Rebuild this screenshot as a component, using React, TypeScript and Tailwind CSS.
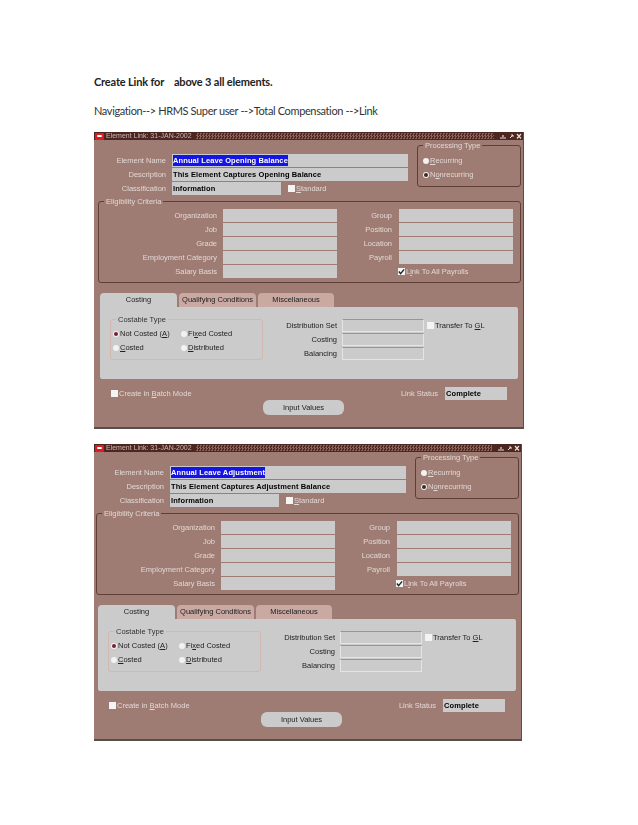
import type { ReactNode } from 'react';

const formFont = "font-['Liberation_Sans',sans-serif]";

function Check({ checked = false }: { checked?: boolean }) {
  return (
    <span className="flex h-[7px] w-[7px] shrink-0 items-center justify-center bg-[#f4f4f4]">
      {checked && (
        <svg viewBox="0 0 8 8" className="h-[7px] w-[7px]">
          <path d="M1 4l2 2.5L7 1.5" fill="none" stroke="#222" strokeWidth="1.6" />
        </svg>
      )}
    </span>
  );
}

function Radio({ on = false, dark = false }: { on?: boolean; dark?: boolean }) {
  return (
    <span className="flex h-[6px] w-[6px] shrink-0 items-center justify-center rounded-full bg-[#f2f2f2]">
      {on && <span className={`h-[4px] w-[4px] rounded-full ${dark ? 'bg-[#3a2a28]' : 'bg-[#7a2030]'}`} />}
    </span>
  );
}

function Field({ children, className = '' }: { children?: ReactNode; className?: string }) {
  return (
    <div className={`flex h-[13px] items-center bg-[#cbcbcb] pl-[1px] text-[7.5px] font-bold tracking-[0.1px] text-black ${className}`}>
      {children}
    </div>
  );
}

function Label({ children }: { children: ReactNode }) {
  return <div className="flex h-[13px] items-center justify-end text-[7.5px] text-[#e2d8d4]">{children}</div>;
}

function Group({ title, className, light = false, children }: { title: string; className: string; light?: boolean; children: ReactNode }) {
  return (
    <div className={`relative rounded-[3px] border ${light ? 'border-[#d2b8b0]' : 'border-[#5e3f38]'} ${className}`}>
      <span
        className={`absolute -top-[6px] left-[5px] px-[2px] text-[7.5px] leading-[11px] ${
          light ? 'bg-[#cbcbcb] text-[#333]' : 'bg-[#9e7b73] text-[#e2d8d4]'
        }`}
      >
        {title}
      </span>
      {children}
    </div>
  );
}

function WindowButtons() {
  return (
    <svg viewBox="0 0 26 8" className="h-[8px] w-[26px] shrink-0 bg-[#4c2620]">
      <path d="M3 6h6M6 3v2" stroke="#e8e0dc" strokeWidth="1.2" fill="none" />
      <path d="M13 6l3-3M14 3h2v2" stroke="#e8e0dc" strokeWidth="1" fill="none" />
      <path d="M20 2l4 4.5M24 2l-4 4.5" stroke="#e8e0dc" strokeWidth="1.2" fill="none" />
    </svg>
  );
}

interface ElementWindowProps {
  date: string;
  name: string;
  description: string;
  widthClass: string;
  offsetClass: string;
  spacingClass: string;
}

function ElementWindow({ date, name, description, widthClass, offsetClass, spacingClass }: ElementWindowProps) {
  const leftLabels = ['Organization', 'Job', 'Grade', 'Employment Category', 'Salary Basis'];
  const rightLabels = ['Group', 'Position', 'Location', 'Payroll'];

  return (
    <div className={`ml-[94px] border-b-2 border-r border-[#55504e] bg-[#9e7b73] blur-[0.4px] ${formFont} ${widthClass} ${spacingClass}`}>
      <div className="flex h-[8px] items-center overflow-hidden bg-[#4c2620]">
        <span className="ml-[1px] flex h-[7px] w-[9px] shrink-0 items-center justify-center rounded-[1px] bg-[#d81e1e]">
          <span className="h-[2px] w-[5px] rounded-full bg-white" />
        </span>
        <span className="ml-[1px] shrink-0 px-[1px] text-[7px] leading-[8px] text-[#c9b8b2]">Element Link: {date}</span>
        <div className="mx-[3px] h-[6px] flex-1 bg-[repeating-conic-gradient(#8a6058_0_25%,#4c2620_0_50%)] bg-[length:3px_3px]" />
        <WindowButtons />
      </div>

      <div className={offsetClass}>
        {/* header fields + processing type */}
        <div className="flex items-start pt-[5px]">
          <div className="w-[312px] pt-[9px]">
            <div className="grid grid-cols-[70px_236px] gap-x-[6px] gap-y-[1px]">
              <Label>Element Name</Label>
              <Field>
                <span className="bg-[#1414e6] text-white">{name}</span>
              </Field>
              <Label>Description</Label>
              <Field>{description}</Field>
              <Label>Classification</Label>
              <div className="flex items-center gap-[3px]">
                <Field className="w-[109px]">Information</Field>
                <div className="ml-[4px] flex items-center gap-[1px] text-[7.5px] text-[#e2d8d4]">
                  <Check />
                  <span>
                    <u>S</u>tandard
                  </span>
                </div>
              </div>
            </div>
          </div>
          <Group title="Processing Type" className="ml-[9px] h-[42px] w-[104px]">
            <div className="flex flex-col gap-[3px] pl-[5px] pt-[9px] text-[7.5px] leading-[11px] text-[#e2d8d4]">
              <div className="flex items-center gap-[1px]">
                <Radio />
                <span>
                  <u>R</u>ecurring
                </span>
              </div>
              <div className="flex items-center gap-[1px]">
                <Radio on dark />
                <span>
                  N<u>o</u>nrecurring
                </span>
              </div>
            </div>
          </Group>
        </div>

        {/* eligibility */}
        <Group title="Eligibility Criteria" className="ml-[2px] mt-[6px] h-[82px] w-[423px]">
          <div className="flex pt-[7px]">
            <div className="grid grid-cols-[118px_114px] gap-x-[6px] gap-y-[1px]">
              {leftLabels.map((label) => (
                <div key={label} className="contents">
                  <Label>{label}</Label>
                  <Field />
                </div>
              ))}
            </div>
            <div className="grid grid-cols-[55px_114px] gap-x-[7px] gap-y-[1px]">
              {rightLabels.map((label) => (
                <div key={label} className="contents">
                  <Label>{label}</Label>
                  <Field />
                </div>
              ))}
              <div />
              <div className="-ml-[1px] flex h-[13px] items-center gap-[1px] text-[7.5px] text-[#e2d8d4]">
                <Check checked />
                <span>
                  L<u>i</u>nk To All Payrolls
                </span>
              </div>
            </div>
          </div>
        </Group>

        {/* tabs */}
        <div className="ml-[4px] mt-[10px] flex h-[14px] w-[418px] gap-[2px] text-[7.5px] text-[#222]">
          <div className="flex w-[77px] items-center justify-center rounded-t-[4px] bg-[#cbcbcb]">Costing</div>
          <div className="flex w-[77px] items-center justify-center rounded-t-[4px] bg-[#c9a9a2]">Qualifying Conditions</div>
          <div className="flex w-[76px] items-center justify-center rounded-t-[4px] bg-[#c9a9a2]">Miscellaneous</div>
        </div>
        <div className="ml-[4px] flex h-[72px] w-[418px] items-start rounded-b-[2px] rounded-r-[2px] bg-[#cbcbcb] pl-[10px] pt-[12px] text-[7.5px] text-[#222]">
          <Group title="Costable Type" light className="h-[41px] w-[153px]">
            <div className="grid grid-cols-[68px_1fr] gap-y-[3px] pl-[2px] pt-[8px] leading-[11px]">
              <div className="flex items-center gap-[1px]">
                <Radio on />
                <span>
                  Not Costed (<u>A</u>)
                </span>
              </div>
              <div className="flex items-center gap-[1px]">
                <Radio />
                <span>
                  Fi<u>x</u>ed Costed
                </span>
              </div>
              <div className="flex items-center gap-[1px]">
                <Radio />
                <span>
                  <u>C</u>osted
                </span>
              </div>
              <div className="flex items-center gap-[1px]">
                <Radio />
                <span>
                  <u>D</u>istributed
                </span>
              </div>
            </div>
          </Group>
          <div className="flex flex-col gap-[1px]">
            {['Distribution Set', 'Costing', 'Balancing'].map((label) => (
              <div key={label} className="flex h-[13px] items-center">
                <span className="w-[74px] text-right">{label}</span>
                <span className="ml-[5px] h-[13px] w-[82px] border border-[#e8e4e4] border-t-[#b58a80] bg-[#cbcbcb]" />
              </div>
            ))}
          </div>
          <div className="ml-[3px] flex h-[13px] items-center gap-[1px]">
            <Check />
            <span>
              Transfer To <u>G</u>L
            </span>
          </div>
        </div>

        {/* footer */}
        <div className="mt-[8px] flex h-[13px] w-[411px] items-center pl-[15px] text-[7.5px] text-[#e2d8d4]">
          <Check />
          <span className="ml-[1px]">
            Create in <u>B</u>atch Mode
          </span>
          <span className="ml-auto mr-[7px]">Link Status</span>
          <Field className="w-[62px]">Complete</Field>
        </div>
        <div className="ml-[167px] flex h-[15px] w-[81px] items-center justify-center rounded-[6px] bg-[#cbcbcb] text-[7.5px] text-[#222]">
          Input Values
        </div>
        <div className="h-[12px]" />
      </div>
    </div>
  );
}

export default function App() {
  return (
    <div className="min-h-[825px] bg-white pt-[74px]">
      <div className="ml-[94px] h-[16px] whitespace-pre font-['Lato',sans-serif] text-[11px] font-bold leading-[16px] tracking-[-0.17px] text-[#222]">
        Create Link for    above 3 all elements.
      </div>
      <div className="mb-[13px] ml-[94px] mt-[13px] h-[16px] font-['Lato',sans-serif] text-[11px] leading-[16px] tracking-[-0.37px] text-[#333]">
        Navigation--&gt; HRMS Super user --&gt;Total Compensation --&gt;Link
      </div>
      <ElementWindow
        date="31-JAN-2002"
        name="Annual Leave Opening Balance"
        description="This Element Captures Opening Balance"
        widthClass="w-[430px]"
        offsetClass="pl-[2px]"
        spacingClass="mb-[15px]"
      />
      <ElementWindow
        date="31-JAN-2002"
        name="Annual Leave Adjustment"
        description="This Element Captures Adjustment Balance"
        widthClass="w-[428px]"
        offsetClass="pl-0"
        spacingClass="mb-0"
      />
    </div>
  );
}
